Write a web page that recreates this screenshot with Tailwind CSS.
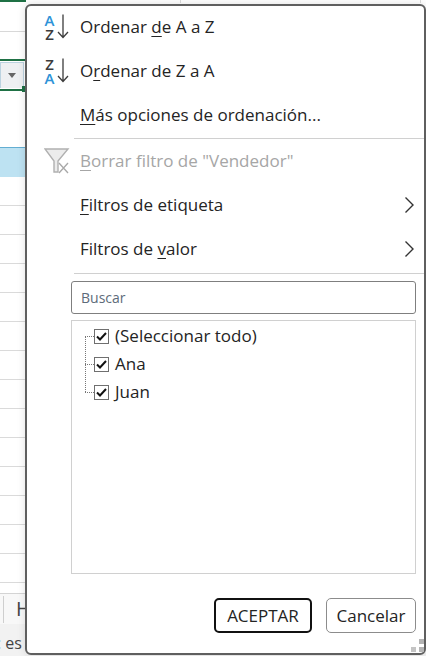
<!DOCTYPE html>
<html lang="es">
<head>
<meta charset="utf-8">
<script src="https://cdn.jsdelivr.net/npm/@tailwindcss/browser@4"></script>
</head>
<body class="bg-white">
<div class="relative w-[426px] h-[656px] overflow-hidden bg-white font-['Open_Sans','Noto_Sans',sans-serif] text-[#242424]">
  <!-- Sheet behind the menu -->
  <div class="flex flex-col h-full">
    <div class="flex h-[3px] shrink-0">
      <div class="w-[26px] border-t-[2px] border-[#1f7145]"></div>
      <div class="w-[155px] border-r border-[#dcdcdc]"></div>
      <div class="w-[240px] border-r border-[#dcdcdc]"></div>
    </div>
    <div class="h-[29px] shrink-0 border-b border-[#d8d8d8] w-[26px]"></div>
    <div class="h-[27px] shrink-0"></div>
    <div class="relative h-[32px] shrink-0 w-[25px] border-y-[2px] border-[#1f7145]">
      <div class="flex items-center justify-center h-[26px] w-[24px] mt-[1px] bg-[#eef0f2] border-x border-t border-[#bcd3e0]">
        <svg width="10" height="6" viewBox="0 0 10 6"><path d="M1 0h8L5 5z" fill="#666"/></svg>
      </div>
      <div class="absolute right-0 bottom-[-3px] w-[3px] h-[6px] bg-[#1f7145]"></div>
    </div>
    <div class="h-[56px] shrink-0"></div>
    <div class="h-[30px] shrink-0 bg-[#bde2f2] border-t border-[#63aed2]"></div>
    <div class="flex flex-col shrink-0">
      <div class="h-[29px] border-b border-[#dadada]"></div>
      <div class="h-[29px] border-b border-[#dadada]"></div>
      <div class="h-[29px] border-b border-[#dadada]"></div>
      <div class="h-[29px] border-b border-[#dadada]"></div>
      <div class="h-[29px] border-b border-[#dadada]"></div>
      <div class="h-[29px] border-b border-[#dadada]"></div>
      <div class="h-[29px] border-b border-[#dadada]"></div>
      <div class="h-[29px] border-b border-[#dadada]"></div>
      <div class="h-[29px] border-b border-[#dadada]"></div>
      <div class="h-[29px] border-b border-[#dadada]"></div>
      <div class="h-[29px] border-b border-[#dadada]"></div>
      <div class="h-[29px] border-b border-[#dadada]"></div>
      <div class="h-[29px] border-b border-[#dadada]"></div>
      <div class="h-[29px] border-b border-[#dadada]"></div>
    </div>
    <div class="h-[10px] shrink-0"></div>
    <div class="flex items-center h-[31px] shrink-0 bg-[#f8f8f8] border-t border-[#d4d4d4] pl-[3px]">
      <div class="w-px h-[27px] bg-[#cfcfcf]"></div>
      <span class="ml-[12px] text-[20px] leading-none text-[#444]">H</span>
    </div>
    <div class="flex items-end flex-1 bg-[#f2f2f2] text-[16px] leading-none pb-[5px]">
      <span class="text-[#444] -ml-[3px]">:&nbsp;es</span>
    </div>
  </div>

  <!-- Filter menu -->
  <div class="absolute left-[25px] top-[4px] w-[401px] h-[651px] flex flex-col bg-white border-[2px] border-[#5f5f5f] rounded-[6px] shadow-[0_0_8px_rgba(0,0,0,0.12)] text-[17px]">
    <!-- Sort rows -->
    <div class="relative flex items-center h-[44px] -mt-px pl-[53px] shrink-0">
      <div class="absolute left-[17px] top-[8px] w-[11px] flex flex-col items-center font-semibold text-[15px] leading-[14px]">
        <span class="text-[#2e93d8]">A</span>
        <span class="text-[#3c3c3c]">Z</span>
      </div>
      <svg class="absolute left-[30px] top-[9px]" width="12" height="25" viewBox="0 0 12 25">
        <path d="M6 0.5V23.5M1 18L6 23.5L11 18" fill="none" stroke="#3c3c3c" stroke-width="1.3"/>
      </svg>
      <span>Ordenar <span class="underline underline-offset-[3px] decoration-1">d</span>e A a Z</span>
    </div>
    <div class="relative flex items-center h-[44px] pl-[53px] shrink-0">
      <div class="absolute left-[17px] top-[8px] w-[11px] flex flex-col items-center font-semibold text-[15px] leading-[14px]">
        <span class="text-[#3c3c3c]">Z</span>
        <span class="text-[#2e93d8]">A</span>
      </div>
      <svg class="absolute left-[30px] top-[9px]" width="12" height="25" viewBox="0 0 12 25">
        <path d="M6 0.5V23.5M1 18L6 23.5L11 18" fill="none" stroke="#3c3c3c" stroke-width="1.3"/>
      </svg>
      <span>O<span class="underline underline-offset-[3px] decoration-1">r</span>denar de Z a A</span>
    </div>
    <div class="flex items-center h-[44px] pl-[53px] shrink-0">
      <span><span class="underline underline-offset-[3px] decoration-1">M</span>ás opciones de ordenación...</span>
    </div>
    <div class="h-px mt-px ml-[47px] bg-[#d0d0d0] shrink-0"></div>
    <!-- Label/value filters -->
    <div class="relative flex items-center h-[44px] pl-[53px] shrink-0 text-[#a6a6a6]">
      <svg class="absolute left-[17px] top-[9px]" width="26" height="27" viewBox="0 0 26 27">
        <path d="M1 1H24L14 13V24H10V13Z" fill="#ececec" stroke="#b0b0b0" stroke-width="1.4"/>
        <path d="M15 15L24 25M24 15L15 25" stroke="#a8a8a8" stroke-width="1.3" fill="none"/>
      </svg>
      <span><span class="underline underline-offset-[3px] decoration-1">B</span>orrar filtro de "Vendedor"</span>
    </div>
    <div class="flex items-center justify-between h-[44px] pl-[53px] pr-[10px] shrink-0">
      <span><span class="underline underline-offset-[3px] decoration-1">F</span>iltros de etiqueta</span>
      <svg width="10" height="18" viewBox="0 0 10 18"><path d="M1.5 1.5L9 9L1.5 16.5" fill="none" stroke="#333" stroke-width="1.4"/></svg>
    </div>
    <div class="flex items-center justify-between h-[44px] pl-[53px] pr-[10px] shrink-0">
      <span>Filtros de <span class="underline underline-offset-[3px] decoration-1">v</span>alor</span>
      <svg width="10" height="18" viewBox="0 0 10 18"><path d="M1.5 1.5L9 9L1.5 16.5" fill="none" stroke="#333" stroke-width="1.4"/></svg>
    </div>
    <div class="h-px mt-[2px] ml-[47px] bg-[#d0d0d0] shrink-0"></div>
    <!-- Search -->
    <div class="flex items-center h-[33px] ml-[44px] mr-[8px] mt-[7px] pl-[9px] border border-[#7f7f7f] rounded-[3px] text-[14px] text-[#5d6b7a] shrink-0">Buscar</div>
    <!-- Tree -->
    <div class="relative h-[254px] ml-[44px] mr-[8px] mt-[6px] border border-[#d0d0d0] shrink-0 pt-[1px]">
      <div class="absolute left-[13px] top-[15px] h-[56px] border-l border-dotted border-[#777]"></div>
      <div class="flex items-center h-[28px] pl-[13px]">
        <div class="w-[9px] border-t border-dotted border-[#777]"></div>
        <div class="flex items-center justify-center w-[15px] h-[15px] border border-[#6f6f6f] bg-white">
          <svg width="11" height="9" viewBox="0 0 11 9"><path d="M1 4.5L4 7.5L10 1" fill="none" stroke="#111" stroke-width="2"/></svg>
        </div>
        <span class="ml-[6px]">(Seleccionar todo)</span>
      </div>
      <div class="flex items-center h-[28px] pl-[13px]">
        <div class="w-[9px] border-t border-dotted border-[#777]"></div>
        <div class="flex items-center justify-center w-[15px] h-[15px] border border-[#6f6f6f] bg-white">
          <svg width="11" height="9" viewBox="0 0 11 9"><path d="M1 4.5L4 7.5L10 1" fill="none" stroke="#111" stroke-width="2"/></svg>
        </div>
        <span class="ml-[6px]">Ana</span>
      </div>
      <div class="flex items-center h-[28px] pl-[13px]">
        <div class="w-[9px] border-t border-dotted border-[#777]"></div>
        <div class="flex items-center justify-center w-[15px] h-[15px] border border-[#6f6f6f] bg-white">
          <svg width="11" height="9" viewBox="0 0 11 9"><path d="M1 4.5L4 7.5L10 1" fill="none" stroke="#111" stroke-width="2"/></svg>
        </div>
        <span class="ml-[6px]">Juan</span>
      </div>
    </div>
    <!-- Buttons -->
    <div class="flex justify-end gap-[14px] mr-[8px] mt-[24px] shrink-0">
      <button class="w-[98px] h-[35px] border-[2px] border-[#111] rounded-[5px] text-[#242424]">ACEPTAR</button>
      <button class="w-[90px] h-[35px] border border-[#8c8c8c] rounded-[5px] text-[#242424]">Cancelar</button>
    </div>
    <!-- Resize grip -->
    <div class="absolute right-[0px] bottom-[1px] grid grid-cols-2 gap-[3px] w-[13px]">
      <div class="w-[5px] h-[5px]"></div>
      <div class="w-[5px] h-[5px] bg-[#b4b4b4]"></div>
      <div class="w-[5px] h-[5px] bg-[#c4c4c4]"></div>
      <div class="w-[5px] h-[5px] bg-[#b4b4b4]"></div>
    </div>
  </div>
</div>
</body>
</html>
